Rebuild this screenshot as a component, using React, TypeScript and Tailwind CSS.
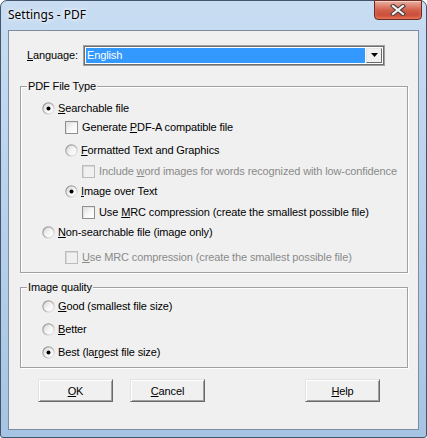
import React from "react";

const FONT = { fontFamily: '"Liberation Sans", Arial, sans-serif' };

function Radio({ checked, disabled }: { checked?: boolean; disabled?: boolean }) {
  return (
    <svg width="13" height="13" viewBox="0 0 13 13" className="shrink-0">
      <defs>
        <linearGradient id="rOuter" x1="0" y1="0" x2="1" y2="1">
          <stop offset="0" stopColor="#8a8a8a" />
          <stop offset="0.55" stopColor="#b8b8b8" />
          <stop offset="1" stopColor="#ffffff" />
        </linearGradient>
        <linearGradient id="rInner" x1="0" y1="0" x2="1" y2="1">
          <stop offset="0" stopColor="#d6d6d6" />
          <stop offset="0.5" stopColor="#f4f4f4" />
          <stop offset="1" stopColor="#ffffff" />
        </linearGradient>
      </defs>
      <circle cx="6.5" cy="6.5" r="6.2" fill="url(#rOuter)" />
      <circle cx="6.5" cy="6.5" r="5" fill={disabled ? "#f0f0f0" : "url(#rInner)"} />
      {checked && <circle cx="6.5" cy="6.5" r="2" fill="#000" />}
    </svg>
  );
}

function Check({ disabled }: { disabled?: boolean }) {
  return disabled ? (
    <div className="w-[13px] h-[13px] shrink-0 border border-[#bcbcbc] bg-[#f0f0f0] shadow-[inset_1px_1px_0_#d8d8d8]" />
  ) : (
    <div className="w-[13px] h-[13px] shrink-0 border border-[#8e8f8f] bg-gradient-to-br from-[#dcdcdc] via-[#f6f6f6] to-white shadow-[inset_1px_1px_0_#e2e2e2]" />
  );
}

function Row({
  cls,
  kind,
  checked,
  disabled,
  children,
}: {
  cls: string;
  kind: "radio" | "check";
  checked?: boolean;
  disabled?: boolean;
  children: React.ReactNode;
}) {
  return (
    <div className={`flex items-center h-[16px] ${cls}`}>
      {kind === "radio" ? <Radio checked={checked} /> : <Check disabled={disabled} />}
      <span
        className={`${kind === "radio" ? "ml-[3px]" : "ml-[4px]"} leading-[16px] whitespace-nowrap ${
          disabled ? "text-[#8a8a8a]" : "text-black"
        }`}
      >
        {children}
      </span>
    </div>
  );
}

function Button({ children, cls }: { children: React.ReactNode; cls: string }) {
  return (
    <div
      className={`w-[75px] h-[23px] flex items-center justify-center bg-[#f0f0f0] border border-t-[#e3e3e3] border-l-[#e3e3e3] border-b-[#696969] border-r-[#696969] shadow-[inset_1px_1px_0_#ffffff,inset_-1px_-1px_0_#a0a0a0] text-black leading-[14px] ${cls}`}
    >
      {children}
    </div>
  );
}

export default function App() {
  return (
    <div className="w-[427px] h-[438px] bg-white overflow-hidden text-[11px] tracking-[-0.12px]" style={FONT}>
      <div className="w-[427px] h-[438px] rounded-t-[7px] rounded-b-[3px] border border-[#44546a] bg-gradient-to-b from-[#c8ddf2] via-[#b7d1ec] to-[#a6c4e3] flex flex-col">
        {/* title bar */}
        <div className="h-[29px] flex justify-between items-start shrink-0">
          <div
            className="pl-[7px] pt-[6px] text-[12px] leading-[16px] tracking-normal text-black [text-shadow:0_0_6px_#ffffff,0_0_3px_#ffffff]"
            style={{ fontFamily: '"Noto Sans", "Open Sans", sans-serif' }}
          >
            Settings - PDF
          </div>
          <div className="-mt-[1px] mr-[4px] w-[48px] h-[20px] rounded-b-[4px] border border-[#6b2e26] bg-gradient-to-b from-[#eab0a2] via-[#d2604c] to-[#c4402c] shadow-[inset_0_1px_0_#f4d0c6,inset_0_-2px_3px_#e8785c] flex items-center justify-center">
            <svg width="16" height="12" viewBox="0 0 16 12">
              <path d="M3 2 L13 10 M13 2 L3 10" stroke="#4a3a3a" strokeWidth="4.2" strokeLinecap="square" />
              <path d="M3 2 L13 10 M13 2 L3 10" stroke="#f4f4f4" strokeWidth="2.2" strokeLinecap="square" />
            </svg>
          </div>
        </div>

        {/* client area */}
        <div className="mx-[7px] h-[400px] shrink-0 border border-[#7d8c9e] bg-[#f0f0f0] flex flex-col">
          {/* language */}
          <div className="mt-[14px] h-[20px] flex items-center">
            <div className="w-[74px] pl-[18px] text-black leading-[16px]">
              <u>L</u>anguage:
            </div>
            <div className="w-[302px] h-[21px] border border-[#a0a0a0] bg-white flex">
              <div className="flex-1 flex border border-[#6d6d6d] bg-white p-[1px]">
                <div className="flex-1 bg-[#3399ff] text-white leading-[15px] pl-[1px]">English</div>
                <div className="w-[16px] ml-[1px] bg-[#f0f0f0] border border-t-[#e3e3e3] border-l-[#e3e3e3] border-b-[#696969] border-r-[#696969] flex items-center justify-center">
                  <svg width="7" height="4" viewBox="0 0 7 4">
                    <path d="M0 0 H7 L3.5 4 Z" fill="#000" />
                  </svg>
                </div>
              </div>
            </div>
          </div>

          {/* PDF File Type group */}
          <div className="relative mt-[21px] ml-[11px] w-[388px] h-[187px] border border-[#a0a0a0] shadow-[inset_1px_1px_0_#ffffff,1px_1px_0_#ffffff] flex flex-col">
            <div className="absolute -top-[8px] left-[6px] px-[1px] bg-[#f0f0f0] leading-[14px] text-black">
              PDF File Type
            </div>
            <Row cls="mt-[13px] ml-[21px]" kind="radio" checked>
              <u>S</u>earchable file
            </Row>
            <Row cls="mt-[3px] ml-[44px]" kind="check">
              Generate <u>P</u>DF-A compatible file
            </Row>
            <Row cls="mt-[7px] ml-[44px]" kind="radio">
              <u>F</u>ormatted Text and Graphics
            </Row>
            <Row cls="mt-[5px] ml-[61px]" kind="check" disabled>
              Include <u>w</u>ord images for words recognized with low-confidence
            </Row>
            <Row cls="mt-[4px] ml-[44px]" kind="radio" checked>
              <u>I</u>mage over Text
            </Row>
            <Row cls="mt-[5px] ml-[61px]" kind="check">
              Use <u>M</u>RC compression (create the smallest possible file)
            </Row>
            <Row cls="mt-[4px] ml-[21px]" kind="radio">
              <u>N</u>on-searchable file (image only)
            </Row>
            <Row cls="mt-[9px] ml-[44px]" kind="check" disabled>
              <u>U</u>se MRC compression (create the smallest possible file)
            </Row>
          </div>

          {/* Image quality group */}
          <div className="relative mt-[14px] ml-[11px] w-[388px] h-[81px] border border-[#a0a0a0] shadow-[inset_1px_1px_0_#ffffff,1px_1px_0_#ffffff] flex flex-col">
            <div className="absolute -top-[8px] left-[6px] px-[1px] bg-[#f0f0f0] leading-[14px] text-black">
              Image quality
            </div>
            <Row cls="mt-[10px] ml-[21px]" kind="radio">
              <u>G</u>ood (smallest file size)
            </Row>
            <Row cls="mt-[7px] ml-[21px]" kind="radio">
              <u>B</u>etter
            </Row>
            <Row cls="mt-[7px] ml-[21px]" kind="radio" checked>
              Best (la<u>r</u>gest file size)
            </Row>
          </div>

          {/* buttons */}
          <div className="mt-[11px] ml-[29px] flex">
            <Button cls="">
              <u>O</u>K
            </Button>
            <Button cls="ml-[17px]">
              <u>C</u>ancel
            </Button>
            <Button cls="ml-[100px]">
              <u>H</u>elp
            </Button>
          </div>
        </div>
      </div>
    </div>
  );
}
